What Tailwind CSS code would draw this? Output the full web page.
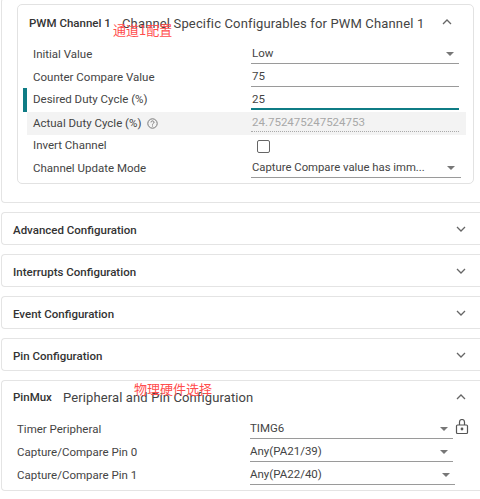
<!DOCTYPE html>
<html lang="en">
<head>
    <meta charset="UTF-8">
    <title>PWM Channel Config</title>
    <script src="https://cdn.jsdelivr.net/npm/@tailwindcss/browser@4"></script>
</head>
<body class="bg-white h-[499px] w-[480px] overflow-hidden relative font-['Roboto',sans-serif] text-[11.5px] text-[#444]">
    <div class="h-[205px] ml-[1px] -mt-[2px] border border-r-0 border-[#e4e4e4] rounded-l-[4px] pl-[15px] pr-[6px] pt-[5px]">
        <div class="h-[180px] border border-[#e2e2e2] rounded-[5px] pl-[11px] pr-[2px]">
            <div class="flex items-center h-[37px]">
                <span class="font-medium text-[#333] w-[93px] shrink-0">PWM Channel 1</span>
                <span class="text-[13px] text-[#444] tracking-[0.15px] whitespace-nowrap flex-1">Channel Specific Configurables for PWM Channel 1</span>
                <svg class="w-[12px] h-[8px] mr-[18px] -translate-y-[2px]" viewBox="0 0 12 8" fill="none" stroke="#666" stroke-width="1.3"><path d="M2 6l4-4 4 4"/></svg>
            </div>

            <div class="h-[23px] flex items-center">
                <span class="w-[222px] pl-[4px] pt-[2px] shrink-0">Initial Value</span>
                <div class="w-[208px] h-[22px] self-start flex items-center justify-between pl-[1px] pt-[3px] border-b border-[#9a9a9a]"><span>Low</span><span class="mr-[5px] border-x-[4.5px] border-t-[4px] border-x-transparent border-t-[#777]"></span></div>
            </div>
            <div class="h-[23px] flex items-center">
                <span class="w-[222px] pl-[4px] pt-[2px] shrink-0">Counter Compare Value</span>
                <div class="w-[208px] h-[22px] self-start flex items-center pl-[1px] pt-[3px] border-b border-[#9a9a9a]"><span>75</span></div>
            </div>
            <div class="h-[24px] flex items-center relative">
                <span class="absolute -left-[6px] top-0 w-[4px] h-[24px] bg-[#0f7c85]"></span>
                <span class="w-[222px] pl-[4px] shrink-0">Desired Duty Cycle (%)</span>
                <div class="w-[208px] h-[22px] self-start flex items-center pl-[1px] pt-[3px] border-b-2 border-[#0f7c85]"><span>25</span></div>
            </div>
            <div class="h-[23px] flex items-center bg-[#f3f3f3] w-[439px] -ml-[2px]">
                <span class="w-[224px] pl-[6px] shrink-0 flex items-center gap-[6px]">Actual Duty Cycle (%)
                    <svg class="w-[11px] h-[11px]" viewBox="0 0 11 11" fill="none" stroke="#777"><circle cx="5.5" cy="5.5" r="4.7"/><path d="M4 4.4c0-2 3-2 3 0 0 1-1.5 1-1.5 2.2M5.5 7.5v1"/></svg>
                </span>
                <div class="w-[208px] h-[20px] self-start flex items-center pl-[1px] pt-[2px] border-b border-dotted border-[#aaa] text-[#a8a8a8]"><span>24.752475247524753</span></div>
            </div>
            <div class="h-[22px] flex items-center">
                <span class="w-[222px] pl-[4px] shrink-0">Invert Channel</span>
                <span class="ml-[6px] w-[13px] h-[13px] border-[1.5px] border-[#666] rounded-[2px]"></span>
            </div>
            <div class="h-[23px] flex items-center">
                <span class="w-[222px] pl-[4px] shrink-0">Channel Update Mode</span>
                <div class="w-[210px] h-[21px] self-start flex items-center justify-between pl-[1px] pt-[2px] border-b border-[#9a9a9a]"><span class="text-[11.3px]">Capture Compare value has imm...</span><span class="mr-[6px] border-x-[4.5px] border-t-[4px] border-x-transparent border-t-[#777]"></span></div>
            </div>
        </div>
    </div>

    <div class="mt-[9px] flex flex-col gap-[9px] pl-[1px]">
        <div class="h-[33px] border border-r-0 border-[#e4e4e4] rounded-l-[4px] flex items-center justify-between pt-[4px] pl-[11px] pr-[13px]"><span class="font-medium text-[#333]">Advanced Configuration</span><svg class="w-[12px] h-[8px] -translate-y-[2px]" viewBox="0 0 12 8" fill="none" stroke="#666" stroke-width="1.3"><path d="M2 2l4 4 4-4"/></svg></div>
        <div class="h-[33px] border border-r-0 border-[#e4e4e4] rounded-l-[4px] flex items-center justify-between pt-[4px] pl-[11px] pr-[13px]"><span class="font-medium text-[#333]">Interrupts Configuration</span><svg class="w-[12px] h-[8px] -translate-y-[2px]" viewBox="0 0 12 8" fill="none" stroke="#666" stroke-width="1.3"><path d="M2 2l4 4 4-4"/></svg></div>
        <div class="h-[33px] border border-r-0 border-[#e4e4e4] rounded-l-[4px] flex items-center justify-between pt-[4px] pl-[11px] pr-[13px]"><span class="font-medium text-[#333]">Event Configuration</span><svg class="w-[12px] h-[8px] -translate-y-[2px]" viewBox="0 0 12 8" fill="none" stroke="#666" stroke-width="1.3"><path d="M2 2l4 4 4-4"/></svg></div>
        <div class="h-[33px] border border-r-0 border-[#e4e4e4] rounded-l-[4px] flex items-center justify-between pt-[4px] pl-[11px] pr-[13px]"><span class="font-medium text-[#333]">Pin Configuration</span><svg class="w-[12px] h-[8px] -translate-y-[2px]" viewBox="0 0 12 8" fill="none" stroke="#666" stroke-width="1.3"><path d="M2 2l4 4 4-4"/></svg></div>

        <div class="h-[111px] border border-r-0 border-[#e4e4e4] rounded-l-[4px] pl-[11px] pr-[13px]">
            <div class="flex items-center h-[36px] pb-[2px]">
                <span class="font-medium text-[#333] w-[50px] shrink-0">PinMux</span>
                <span class="text-[13px] text-[#444] tracking-[0.12px] whitespace-nowrap flex-1">Peripheral and Pin Configuration</span>
                <svg class="w-[12px] h-[8px] -translate-y-[1px]" viewBox="0 0 12 8" fill="none" stroke="#666" stroke-width="1.3"><path d="M2 6l4-4 4 4"/></svg>
            </div>
            <div class="h-[23px] flex items-center">
                <span class="w-[237px] pl-[4px] pt-[2px] shrink-0">Timer Peripheral</span>
                <div class="w-[203px] h-[22px] shrink-0 self-start flex items-center justify-between pt-[3px] border-b border-[#9a9a9a]"><span>TIMG6</span><span class="mr-[5px] border-x-[4.5px] border-t-[4px] border-x-transparent border-t-[#777]"></span></div>
                <svg class="ml-[2px] w-[14px] h-[16px] shrink-0 self-start mt-[2px]" viewBox="0 0 14 16" fill="none" stroke="#555" stroke-width="1.2"><rect x="1.5" y="6" width="11" height="8.5" rx="1"/><path d="M4.5 6V3a2.5 2.5 0 0 1 5 0V6"/><circle cx="7" cy="10" r="0.8" fill="#555"/></svg>
            </div>
            <div class="h-[23px] flex items-center">
                <span class="w-[237px] pl-[4px] pt-[2px] shrink-0">Capture/Compare Pin 0</span>
                <div class="w-[203px] h-[22px] shrink-0 self-start flex items-center justify-between pt-[3px] border-b border-[#9a9a9a]"><span>Any(PA21/39)</span><span class="mr-[5px] border-x-[4.5px] border-t-[4px] border-x-transparent border-t-[#777]"></span></div>
            </div>
            <div class="h-[23px] flex items-center">
                <span class="w-[237px] pl-[4px] pt-[2px] shrink-0">Capture/Compare Pin 1</span>
                <div class="w-[205px] h-[22px] shrink-0 self-start flex items-center justify-between pt-[3px] border-b border-[#9a9a9a]"><span>Any(PA22/40)</span><span class="mr-[5px] border-x-[4.5px] border-t-[4px] border-x-transparent border-t-[#777]"></span></div>
            </div>
        </div>
    </div>

    <!-- red annotations pasted over the screenshot -->
    <span class="absolute left-[113px] top-[21px] text-[13px] leading-[18px] text-[#ff4d4d] font-['Noto_Sans_CJK_SC',sans-serif]">通道1配置</span>
    <span class="absolute left-[134px] top-[380px] text-[13px] leading-[18px] text-[#ff4d4d] font-['Noto_Sans_CJK_SC',sans-serif]">物理硬件选择</span>
</body>
</html>
